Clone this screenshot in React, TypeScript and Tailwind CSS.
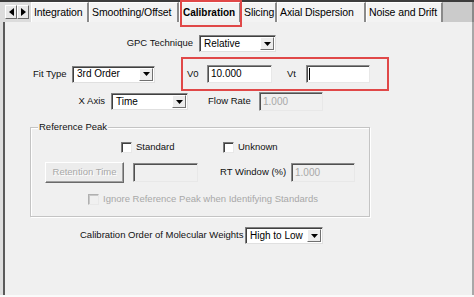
import React from "react";

function Arrow({ dir }: { dir: "l" | "r" }) {
  return (
    <div className="w-[12px] h-[14px] bg-[#e8e8e8] border border-t-white border-l-white border-r-[#6a6a6a] border-b-[#6a6a6a] flex items-center justify-center">
      <svg width="5" height="8" viewBox="0 0 5 8">
        <path d={dir === "l" ? "M5 0 L0 4 L5 8Z" : "M0 0 L5 4 L0 8Z"} fill="#000" />
      </svg>
    </div>
  );
}

function Select({ className, value }: { className: string; value: string }) {
  return (
    <div
      className={
        "flex items-center justify-between bg-white h-[17px] border border-t-[#808080] border-l-[#808080] border-r-[#e0e0e0] border-b-[#e0e0e0] shadow-[inset_1px_1px_0_#404040] " +
        className
      }
    >
      <span className="pl-[4px] text-[10px] text-black leading-none">{value}</span>
      <div className="w-[14px] h-[13px] mr-[1px] bg-[#ececec] border border-t-white border-l-white border-r-[#707070] border-b-[#707070] flex items-center justify-center">
        <svg width="7" height="4" viewBox="0 0 7 4">
          <path d="M0 0 L7 0 L3.5 4Z" fill="#000" />
        </svg>
      </div>
    </div>
  );
}

function Input({
  className,
  value,
  disabled,
  caret,
}: {
  className: string;
  value?: string;
  disabled?: boolean;
  caret?: boolean;
}) {
  return (
    <div
      className={
        "flex items-center border border-t-[#8a8a8a] border-l-[#8a8a8a] border-r-[#e8e8e8] border-b-[#e8e8e8] shadow-[inset_1px_1px_0_#505050] " +
        (disabled ? "bg-[#f0f0f0] text-[#a8a8a8] " : "bg-white text-black ") +
        className
      }
    >
      {caret && <span className="ml-[2px] w-[1px] h-[12px] bg-black" />}
      {value && <span className="pl-[3px] text-[10px] leading-none">{value}</span>}
    </div>
  );
}

function Check({ disabled }: { disabled?: boolean }) {
  return (
    <div
      className={
        "w-[11px] h-[11px] border border-t-[#7a7a7a] border-l-[#7a7a7a] border-r-[#e8e8e8] border-b-[#e8e8e8] shadow-[inset_1px_1px_0_#404040] " +
        (disabled ? "bg-[#f0f0f0] border-t-[#b0b0b0] border-l-[#b0b0b0] shadow-[inset_1px_1px_0_#c8c8c8]" : "bg-white")
      }
    />
  );
}

export default function App() {
  const tabs = [
    { t: "Integration", w: "w-[58px]" },
    { t: "Smoothing/Offset", w: "w-[90px]" },
    { t: "Calibration", w: "w-[62px]", sel: true },
    { t: "Slicing", w: "w-[36px]" },
    { t: "Axial Dispersion", w: "w-[89px]" },
    { t: "Noise and Drift", w: "w-[77px]" },
  ];
  return (
    <div className="relative w-[474px] h-[297px] overflow-hidden bg-[#f0f0f0] flex flex-col font-['Liberation_Sans',Arial,sans-serif] text-[9.5px] text-[#111]">
      <div className="h-[2px] bg-[#3c3c3c] shrink-0" />
      {/* tab bar */}
      <div className="h-[20px] shrink-0 flex bg-[#cbcbcb]">
        <div className="w-[5px] bg-[#dcdcdc]" />
        <div className="flex items-center bg-[#dcdcdc] pr-[2px]">
          <Arrow dir="l" />
          <Arrow dir="r" />
        </div>
        <div className="flex">
          {tabs.map((tb) => (
            <div
              key={tb.t}
              className={
                "h-[20px] flex items-center bg-[#f3f3f3] border-t border-t-white border-l border-l-white border-r-2 border-r-[#8a8a8a] text-black whitespace-nowrap overflow-hidden " +
                tb.w +
                (tb.sel ? " font-bold text-[10px] pl-[3px]" : " text-[10.5px] pl-[2px] tracking-[-0.1px]")
              }
            >
              {tb.t}
            </div>
          ))}
        </div>
        <div className="flex-1" />
        <div className="w-[2px] bg-[#8a8a8a]" />
      </div>
      {/* body */}
      <div className="flex-1 flex">
        <div className="w-[3px] bg-[#dedede]" />
        <div className="w-[2px] bg-[#5a5a5a]" />
        <div className="flex-1 flex flex-col">
          {/* GPC technique */}
          <div className="mt-[13px] flex items-center h-[17px]">
            <div className="w-[188px] text-right">GPC Technique</div>
            <Select className="ml-[6px] w-[77px]" value="Relative" />
          </div>
          {/* fit type + V0/Vt */}
          <div className="mt-[5px] flex items-center h-[34px]">
            <div className="ml-[28px] w-[39px]">Fit Type</div>
            <Select className="w-[83px]" value="3rd Order" />
            <div className="ml-[26px] w-[208px] h-[34px] border-2 border-[#e04848] flex items-center">
              <div className="ml-[4px] w-[20px]">V0</div>
              <Input className="w-[65px] h-[18px]" value="10.000" />
              <div className="ml-[15px] w-[19px]">Vt</div>
              <Input className="w-[64px] h-[18px]" caret />
            </div>
          </div>
          {/* x axis / flow rate */}
          <div className="mt-[1px] flex items-center h-[19px]">
            <div className="w-[100px] text-right">X Axis</div>
            <Select className="ml-[6px] w-[77px]" value="Time" />
            <div className="ml-[20px] w-[51px]">Flow Rate</div>
            <Input className="w-[64px] h-[19px]" value="1.000" disabled />
          </div>
          {/* reference peak group */}
          <div className="relative mt-[16px] ml-[25px] w-[340px] h-[90px] border border-[#c4c4c4] shadow-[1px_1px_0_#ffffff,inset_1px_1px_0_#ffffff] flex flex-col">
            <div className="absolute left-[7px] top-[-7px] px-[1px] bg-[#f0f0f0] leading-[12px]">Reference Peak</div>
            <div className="mt-[14px] flex items-center h-[11px]">
              <div className="ml-[90px]"><Check /></div>
              <div className="ml-[4px] w-[87px]">Standard</div>
              <Check />
              <div className="ml-[4px]">Unknown</div>
            </div>
            <div className="mt-[9px] flex items-center h-[21px]">
              <div className="ml-[14px] w-[79px] h-[21px] bg-[#ececec] border border-t-white border-l-white border-r-[#6a6a6a] border-b-[#6a6a6a] shadow-[inset_-1px_-1px_0_#a0a0a0] flex items-center justify-center text-[#a8a8a8] [text-shadow:1px_1px_0_#ffffff]">
                Retention Time
              </div>
              <Input className="ml-[9px] w-[65px] h-[19px]" disabled />
              <div className="ml-[22px] w-[71px] whitespace-nowrap">RT Window (%)</div>
              <Input className="w-[64px] h-[19px]" value="1.000" disabled />
            </div>
            <div className="mt-[11px] flex items-center h-[11px] text-[#a8a8a8]">
              <div className="ml-[57px]"><Check disabled /></div>
              <div className="ml-[4px] whitespace-nowrap">Ignore Reference Peak when Identifying Standards</div>
            </div>
          </div>
          {/* calibration order */}
          <div className="mt-[10px] flex items-center h-[17px]">
            <div className="ml-[75px] w-[165px] whitespace-nowrap">Calibration Order of Molecular Weights</div>
            <Select className="w-[78px]" value="High to Low" />
          </div>
        </div>
        <div className="w-[2px] bg-[#a8a8a8]" />
      </div>
      <div className="h-[2px] shrink-0 bg-[#fafafa]" />
      {/* highlight around selected tab */}
      <div className="absolute left-[180px] top-0 w-[62px] h-[27px] border-2 border-[#e04848] pointer-events-none" />
    </div>
  );
}
